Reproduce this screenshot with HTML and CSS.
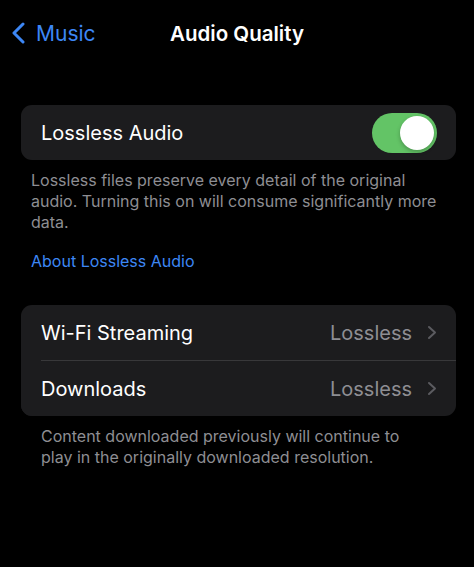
FILE: index.html
```html
<!DOCTYPE html>
<html lang="en">
<head>
    <meta charset="UTF-8">
    <meta name="viewport" content="width=device-width, initial-scale=1.0">
    <title>Audio Quality</title>
    <link rel="stylesheet" href="styles.css">
</head>
<body>
    <header class="nav">
        <a class="back" href="#">
            <svg class="back-icon" width="16" height="22" viewBox="0 0 16 22">
                <path d="M12 2 L3 11 L12 20" fill="none" stroke="currentColor" stroke-width="3" stroke-linecap="round" stroke-linejoin="round"/>
            </svg>
            <span>Music</span>
        </a>
        <h1 class="title">Audio Quality</h1>
        <div></div>
    </header>

    <section class="group group-first">
        <div class="card">
            <div class="row">
                <span class="row-label">Lossless Audio</span>
                <span class="toggle on"><span class="knob"></span></span>
            </div>
        </div>
        <p class="note note-wide">Lossless files preserve every detail of the original audio. Turning this on will consume significantly more data.</p>
        <a class="link" href="#">About Lossless Audio</a>
    </section>

    <section class="group group-second">
        <div class="card">
            <div class="row">
                <span class="row-label">Wi-Fi Streaming</span>
                <span class="row-value">Lossless
                    <svg class="chevron" width="10" height="15" viewBox="0 0 10 15">
                        <path d="M2 2 L8 7.5 L2 13" fill="none" stroke="currentColor" stroke-width="2" stroke-linecap="round" stroke-linejoin="round"/>
                    </svg>
                </span>
            </div>
            <div class="row">
                <span class="row-label">Downloads</span>
                <span class="row-value">Lossless
                    <svg class="chevron" width="10" height="15" viewBox="0 0 10 15">
                        <path d="M2 2 L8 7.5 L2 13" fill="none" stroke="currentColor" stroke-width="2" stroke-linecap="round" stroke-linejoin="round"/>
                    </svg>
                </span>
            </div>
        </div>
        <p class="note note-inset">Content downloaded previously will continue to play in the originally downloaded resolution.</p>
    </section>
</body>
</html>
```

FILE: styles.css
```css
body {
    margin: 0;
    background-color: #000;
    color: #fff;
    font-family: 'Inter', 'Noto Sans', sans-serif;
    -webkit-font-smoothing: antialiased;
}

.nav {
    display: grid;
    grid-template-columns: 1fr auto 1fr;
    align-items: center;
    height: 66px;
}

.back {
    display: flex;
    align-items: center;
    gap: 9px;
    padding-left: 11px;
    color: #3d87f5;
    text-decoration: none;
    font-size: 21px;
}

.back-icon {
    flex-shrink: 0;
}

.title {
    margin: 0;
    font-size: 20.5px;
    font-weight: 600;
    color: #fff;
}

.group {
    margin: 0 18px 0 21px;
}

.group-first {
    margin-top: 39px;
}

.group-second {
    margin-top: 33px;
}

.card {
    background-color: #1c1c1e;
    border-radius: 11px;
    overflow: hidden;
}

.row {
    display: flex;
    align-items: center;
    justify-content: space-between;
    height: 55px;
    padding: 0 20px;
    font-size: 20px;
}

.row + .row {
    box-shadow: inset 20px 0 0 #1c1c1e, inset 0 1px 0 #38383a;
    height: 56px;
    padding-top: 1px;
    box-sizing: border-box;
}

.row-label {
    color: #fff;
}

.row-value {
    display: flex;
    align-items: center;
    gap: 15px;
    color: #8e8e93;
    margin-right: -1px;
}

.chevron {
    color: #5b5b60;
}

.toggle {
    position: relative;
    width: 65px;
    height: 40px;
    border-radius: 20px;
    background-color: #3a3a3c;
    margin-right: -1px;
}

.toggle.on {
    background-color: #63c466;
}

.knob {
    position: absolute;
    top: 3px;
    right: 3px;
    width: 34px;
    height: 34px;
    border-radius: 50%;
    background-color: #fff;
    box-shadow: 0 2px 4px rgba(0, 0, 0, 0.25);
}

.note {
    margin: 10px 0 0 0;
    font-size: 16px;
    line-height: 21px;
    color: #8e8e93;
}

.note-wide {
    padding: 0 10px;
}

.note-inset {
    padding: 0 40px 0 20px;
}

.link {
    display: block;
    margin-top: 18px;
    padding-left: 10px;
    font-size: 16px;
    line-height: 21px;
    color: #3d87f5;
    text-decoration: none;
}
```
